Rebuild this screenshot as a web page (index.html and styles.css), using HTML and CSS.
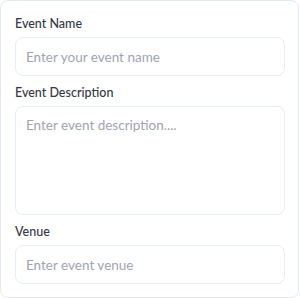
FILE: index.html
```html
<!DOCTYPE html>
<html>
<head>
<meta charset="utf-8">
<link rel="stylesheet" href="styles.css">
</head>
<body>
<form class="card">
  <div class="field">
    <label class="label" for="name">Event Name</label>
    <input class="input" id="name" type="text" placeholder="Enter your event name">
  </div>
  <div class="field">
    <label class="label" for="desc">Event Description</label>
    <textarea class="input textarea" id="desc" placeholder="Enter event description...."></textarea>
  </div>
  <div class="field">
    <label class="label" for="venue">Venue</label>
    <input class="input" id="venue" type="text" placeholder="Enter event venue">
  </div>
</form>
</body>
</html>
```
FILE: styles.css
```css
* { box-sizing: border-box; }
html, body { margin: 0; padding: 0; background: #ffffff; }
body { font-family: Lato, "Liberation Sans", sans-serif; }
.card {
  width: 299px;
  height: 298px;
  border: 1px solid #e3eaf2;
  border-radius: 8px;
  padding: 14px 13px 14px 14px;
  display: flex;
  flex-direction: column;
  gap: 8px;
  background: #fff;
}
.field { display: flex; flex-direction: column; gap: 4px; }
.label {
  font-size: 12.5px;
  line-height: 18px;
  color: #343845;
  font-weight: 500;
}
.input {
  width: 100%;
  height: 39px;
  border: 1px solid #e8eef5;
  border-radius: 8px;
  padding: 0 10px;
  font-family: inherit;
  font-size: 13.5px;
  color: #343845;
  background: #fff;
  outline: none;
}
.input::placeholder { color: #9ea5b2; }
.textarea {
  height: 109px;
  padding: 9px 10px;
  line-height: 18px;
  resize: none;
}
```
